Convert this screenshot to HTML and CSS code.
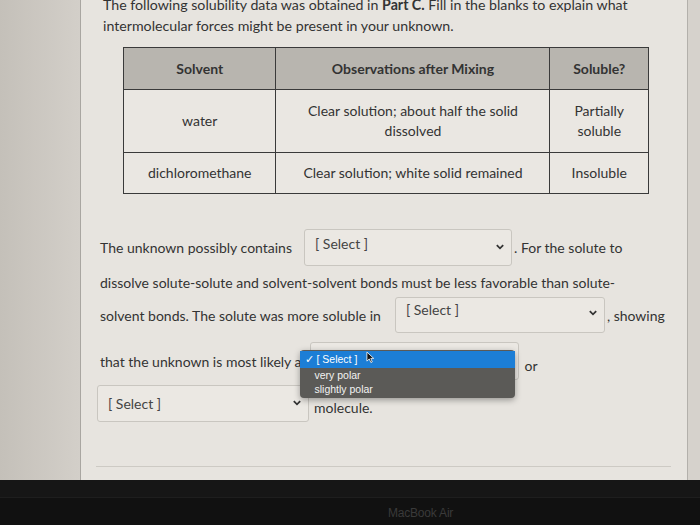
FILE: index.html
```html
<!DOCTYPE html>
<html>
<head>
<meta charset="utf-8">
<link rel="stylesheet" href="styles.css">
</head>
<body>
<div class="screen">
  <div class="side-left"></div>
  <div class="panel">
    <p class="intro">The following solubility data was obtained in <b>Part C.</b> Fill in the blanks to explain what<br>intermolecular forces might be present in your unknown.</p>
    <table class="data">
      <tr class="head">
        <th class="c1">Solvent</th>
        <th class="c2">Observations after Mixing</th>
        <th class="c3">Soluble?</th>
      </tr>
      <tr class="r1">
        <td>water</td>
        <td>Clear solution; about half the solid<br>dissolved</td>
        <td>Partially<br>soluble</td>
      </tr>
      <tr class="r2">
        <td>dichloromethane</td>
        <td>Clear solution; white solid remained</td>
        <td>Insoluble</td>
      </tr>
    </table>

    <div class="quiz">
      <div class="row row1">
        <span>The unknown possibly contains</span>
        <div class="select s1"><span>[ Select ]</span><svg class="chev" viewBox="0 0 10 7"><path d="M1 1.2 L5 5.2 L9 1.2" /></svg></div>
        <span class="tight">. For the solute to</span>
      </div>
      <div class="row row2">
        <span>dissolve solute-solute and solvent-solvent bonds must be less favorable than solute-</span>
      </div>
      <div class="row row3">
        <span>solvent bonds. The solute was more soluble in</span>
        <div class="select s2"><span>[ Select ]</span><svg class="chev" viewBox="0 0 10 7"><path d="M1 1.2 L5 5.2 L9 1.2" /></svg></div>
        <span class="tight">, showing</span>
      </div>
      <div class="row row4">
        <span>that the unknown is most likely a</span>
        <div class="select s3"><svg class="chev" viewBox="0 0 10 7"><path d="M1 1.2 L5 5.2 L9 1.2" /></svg>
          <div class="popup">
            <div class="opt hl"><span class="check">✓</span>[ Select ]</div>
            <div class="opt">very polar</div>
            <div class="opt">slightly polar</div>
            <svg class="cursor" viewBox="0 0 10 14"><path d="M1 1 L1 11 L3.6 8.6 L5.4 12.6 L7 11.9 L5.3 8 L8.6 8 Z" /></svg>
          </div>
        </div>
        <span class="or">or</span>
      </div>
      <div class="row row5">
        <div class="select s4"><span>[ Select ]</span><svg class="chev" viewBox="0 0 10 7"><path d="M1 1.2 L5 5.2 L9 1.2" /></svg></div>
        <span class="tight2">molecule.</span>
      </div>
    </div>
    <div class="rule"></div>
  </div>
  <div class="side-right"></div>
</div>
<div class="bezel">
  <div class="bezel-top"></div>
  <div class="brand">MacBook Air</div>
</div>
</body>
</html>
```

FILE: styles.css
```css
html, body {
  margin: 0;
  padding: 0;
}
body {
  width: 700px;
  height: 525px;
  overflow: hidden;
  background: #cbc7c0;
  font-family: Lato, "Liberation Sans", Arial, sans-serif;
  color: #2e2e2e;
}
.screen {
  display: flex;
  height: 480px;
  overflow: hidden;
}
.side-left {
  width: 80px;
  flex: none;
  background: linear-gradient(90deg, #c4c0b9, #d3cfc9);
}
.side-right {
  width: 12px;
  flex: none;
  background: #d6d2cc;
}
.panel {
  flex: 1;
  background: #e7e4df;
  border-left: 1px solid #a9a6a1;
  border-right: 1px solid #b3b0ab;
  position: relative;
}
.intro {
  margin: -6px 0 0 0;
  padding-left: 22px;
  font-size: 14.2px;
  line-height: 21px;
  color: #333;
  white-space: nowrap;
}
.intro b {
  font-weight: 700;
}
.data {
  margin: 11px 0 0 42px;
  border-collapse: collapse;
  width: 526px;
  font-size: 14px;
  color: #333;
  background: #eae7e2;
}
.data th, .data td {
  border: 1.5px solid #3a3a3a;
  text-align: center;
  padding: 0;
  line-height: 20px;
}
.data th {
  background: #b8b5af;
  font-weight: 700;
  height: 41px;
}
.c1 { width: 152px; }
.c2 { width: 275px; }
.c3 { width: 98px; }
.r1 td { height: 62px; }
.r2 td { height: 40px; }

.quiz {
  margin-top: 34px;
  padding-left: 19px;
  font-size: 14px;
  color: #333;
}
.row {
  display: flex;
  align-items: center;
  white-space: nowrap;
}
.row1 { height: 38px; }
.row2 { height: 30px; margin-top: 1px; }
.row3 { height: 36px; }
.row4 { height: 40px; margin-top: 8px; }
.row5 { height: 40px; margin-left: -3px; margin-top: 2px; }
.select {
  position: relative;
  box-sizing: border-box;
  width: 208px;
  height: 37px;
  margin-left: 12px;
  border: 1px solid #c9c6c0;
  border-radius: 3px;
  background: #ebe8e3;
  display: flex;
  align-items: center;
  padding-left: 10px;
  color: #444;
  font-size: 14px;
}
.select > span {
  margin-top: -8px;
}
.s2 { width: 210px; height: 36px; margin-left: 14px; }
.s2 > span { margin-top: -12px; }
.s3 { width: 209px; height: 38px; margin-left: 8px; }
.s4 { width: 212px; height: 37px; margin-left: 0; }
.s4 > span { margin-top: 0; }
.chev {
  position: absolute;
  right: 7px;
  top: 14px;
  width: 8px;
  height: 6px;
  fill: none;
  stroke: #333;
  stroke-width: 2.2;
}
.s2 .chev { top: 12px; }
.s4 .chev { top: 14px; }
.tight { margin-left: 2px; }
.tight2 { margin-left: 5px; margin-top: 8px; }
.or { margin-left: 6px; margin-top: 8px; }

.popup {
  position: absolute;
  left: -11px;
  top: 7px;
  width: 215px;
  height: 48px;
  border-radius: 4px;
  background: #5b5a57;
  box-shadow: 0 2px 6px rgba(0,0,0,0.35);
  padding-top: 1px;
  box-sizing: border-box;
  font-family: "Liberation Sans", Arial, sans-serif;
  font-size: 10.5px;
  color: #f2f2f2;
  z-index: 2;
}
.opt {
  height: 14px;
  line-height: 14px;
  padding-left: 15px;
}
.opt.hl {
  height: 17px;
  line-height: 17px;
  background: #1c7ed6;
  padding-left: 5px;
  color: #fff;
}
.check {
  margin-right: 3px;
}
.cursor {
  position: absolute;
  left: 66px;
  top: 1px;
  width: 9px;
  height: 13px;
  fill: #111;
  stroke: #fff;
  stroke-width: 0.9;
}
.rule {
  position: absolute;
  left: 15px;
  right: 16px;
  top: 466px;
  height: 1px;
  background: #cdcac4;
}
.bezel {
  height: 45px;
  background: #111111;
  position: relative;
}
.bezel-top {
  height: 17px;
  background: #161616;
  border-bottom: 1px solid #1e1e1e;
}
.brand {
  position: absolute;
  left: 388px;
  top: 26px;
  font-family: "Liberation Sans", Arial, sans-serif;
  font-size: 12px;
  color: #3a3a3a;
  letter-spacing: -0.2px;
}
```
